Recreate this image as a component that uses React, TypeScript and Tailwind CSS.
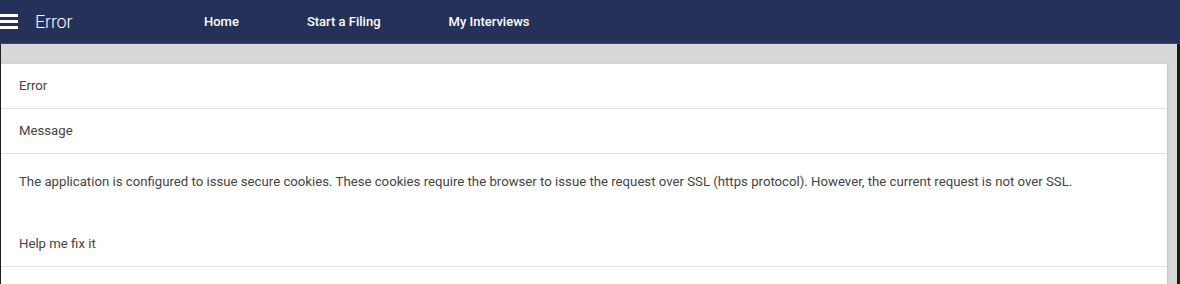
import React from "react";

export default function App() {
  return (
    <div className="w-[1180px] h-[284px] overflow-hidden bg-[#d8d8d8] flex flex-col" style={{ fontFamily: "Roboto, 'Liberation Sans', sans-serif" }}>
      <header className="h-[44px] shrink-0 bg-[#263159] border-b border-[#3a4470] flex items-center">
        <div className="w-[18px] flex flex-col gap-[3px]">
          <div className="h-[3px] bg-white" />
          <div className="h-[3px] bg-white" />
          <div className="h-[3px] bg-white" />
        </div>
        <div className="ml-[17px] w-[169px] text-[18px] text-white font-light tracking-[-0.2px]">Error</div>
        <nav className="flex items-center text-white text-[13px] font-medium">
          <span>Home</span>
          <span className="ml-[68px]">Start a Filing</span>
          <span className="ml-[68px]">My Interviews</span>
        </nav>
      </header>
      <div className="flex-1 flex border-l border-[#222] border-r-[3px] border-r-[#1a1a1a]">
        <div className="flex-1 pt-[20px] pr-[10px]">
          <div className="bg-white shadow-[0_1px_3px_rgba(0,0,0,0.2)] h-full text-[13.2px] text-[#444]">
            <div className="h-[45px] flex items-center px-[18px] border-b border-[#e0e0e0]">Error</div>
            <div className="h-[45px] flex items-center px-[18px] border-b border-[#e0e0e0]">Message</div>
            <div className="px-[18px] pt-[18px] pb-[12px] border-b border-[#e0e0e0]">
              <p className="leading-[20px]">
                The application is configured to issue secure cookies. These cookies require the browser to issue the request over SSL (https protocol). However, the current request is not over SSL.
              </p>
              <p className="leading-[20px] mt-[42px]">Help me fix it</p>
            </div>
          </div>
        </div>
      </div>
    </div>
  );
}
